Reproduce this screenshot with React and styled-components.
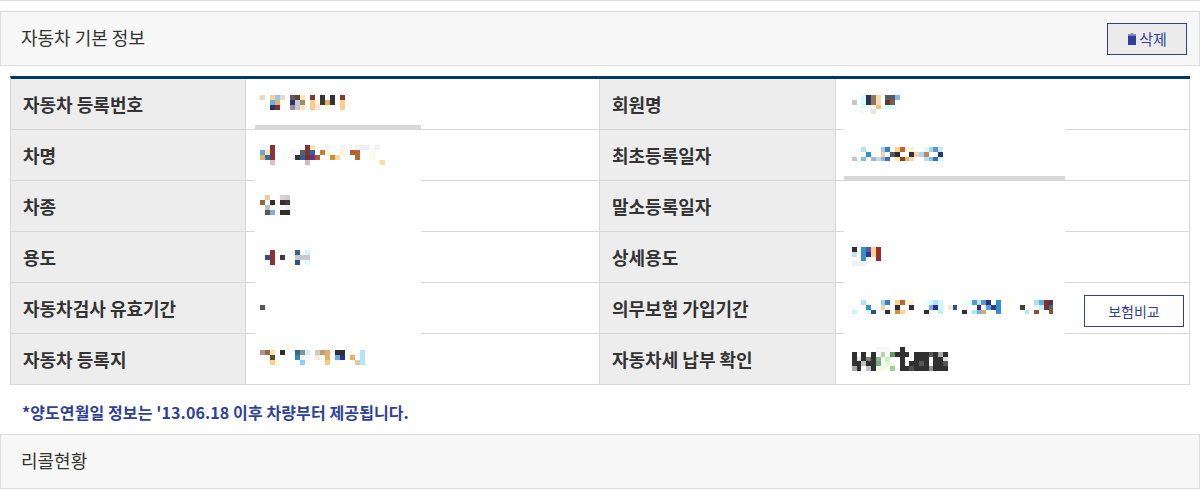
import styled, { createGlobalStyle } from "styled-components";

const GlobalStyle = createGlobalStyle`
  body {
    margin: 0;
    background: #fff;
    font-family: "Noto Sans CJK KR", "Noto Sans", sans-serif;
    color: #333;
  }
`;

// blurred values, one string per line of blocks: "column:colour"
const blur = {
  number: [
    "0:e8d8c4 2:fbd08f 3:93c8ee 4:e8d8c8 6:5c5c5c 7:57483a 8:fde3b0 10:7d3b33 12:333 14:333 16:7d3b33",
    "2:66ade8 3:e9ab66 6:2f2f7a 7:c8c8d0 8:9b8c6c 10:fdcb8b 11:fff9d8 12:40392c 13:e9ab66 14:333 16:fdcb8b",
    "2:2e2e70 3:7d3030 6:929292 7:c4c8dc 8:fde3b0 10:fdcb8b 11:fde0d8 13:fffde0 16:fdcb8b",
  ],
  name: [
    "1:f8f8fa 2:8e3232 9:7d3535 10:fde9b5 12:f8f8fd 13:f2f2f6 16:f2f2f8 19:f8f0f0 20:f0f0f4 21:f0f0f4 23:f0f0f4",
    "0:5faae0 1:fde3ae 2:8e3232 6:f2f2f6 8:606060 9:7d3535 10:3060b0 12:c48030 13:fffad0 16:fff8c8 18:b06030 19:b06830 22:fffde0",
    "0:e9b066 1:3070b0 2:8e3232 7:333 8:3a5aa0 9:703030 10:703080 11:a85a30 14:d09030 15:fdd8a0 19:b06c30 22:fffde0",
    "2:dcc0c4 9:ccc0c4 24:fddca0",
  ],
  kind: [
    "1:f0c8a0 4:e4d0c8 5:c8ccdc",
    "0:906a48 2:2e2e2e 4:2e2e40 5:403828",
    "1:c0c0c0 4:f8f4f8 5:f0f0fa",
    "1:585858 2:7eb0e0 4:2e2e2e 5:2e2e2e",
  ],
  use: [
    "2:8e3232 7:34609a 9:d0f4ff",
    "1:2e5090 2:8e3232 4:4a3040 7:c8c8cc 8:c8c8cc 9:c8c8cc",
    "2:8e3232 7:2e5090 9:e0f8ff",
  ],
  period: ["0:585858"],
  place: [
    "0:b89090 1:907050 2:fde3a0 4:2e2e2e 7:306888 8:909090 9:d0f0ff 11:d0c8c8 12:c09c70 13:e9ab66 15:2e2e36 16:2e2e36 18:fffde8 20:b0e4ff",
    "2:505038 7:3088c0 8:f0f0f4 9:f8f8ff 11:f4eadc 13:e9ab66 15:66a8e8 16:2e2e80 18:e9b066 20:b0e4ff",
    "2:fdd088 3:fffde0 8:90ccff 13:fdcb80 19:e8c8a0 20:b0e4ff",
  ],
  member: [
    "3:d0ffff 4:303050 5:907860 6:f4dcb0 8:5a5a5a 9:5a5a5a 10:7eb8ec",
    "1:c8c8c8 3:d0ffff 4:303050 5:907860 6:f4dcb0 8:603828 9:786050",
    "3:d8ffff 6:f4c080 8:ccffff 9:ccffff",
    "3:f0ffff 5:f0e0d8",
  ],
  firstDate: [
    "0:fffff4 3:b0e0ff 7:a0ccec 8:3a80c0 10:fdd090 11:b06c30 12:fff4d8 13:fff0d0 16:e0f8ff 17:a0d4f4 18:5898d0 19:c0f0ff",
    "4:3090d0 7:fdd0a0 8:e8ffff 9:585858 10:2e2e2e 13:303040 14:fdd0a0 15:a8d4f8 16:c08858 19:303080",
    "1:c8c8c8 3:80c0ec 5:98bcc8 6:c8d8ec 7:98b4dc 8:3a70b0 10:fde8b0 11:804828 12:ecb070 13:ecd8b8 16:c0dcec 17:80c0ec 18:3a70b0 19:c8ffff",
  ],
  detail: [
    "1:303030 3:3090d0 4:5858a0 5:fdd090 6:903030",
    "1:c8e0ec 3:3090d0 4:303090 5:fdd090 6:903030",
    "3:3090d0 6:903030",
    "1:f0f0f4 2:f0f0f4 3:f0f0f4",
  ],
  insurance: [
    "0:fffff4 3:b0e0ff 7:a0ccec 8:3a80c0 10:fdd090 11:b06c30 12:fff4d8 13:fff0d0 16:f0ffff 17:d8f8ff 18:b0e0ff 19:d0f8ff 24:f0ffff 25:e0ffff 26:5898d0 27:b8e8ff 28:5898d0 29:303090 31:3090d0 33:fffff0 39:b0dcf4 40:60b0e8 41:803030 42:603040",
    "4:3090d0 7:fdd0a0 8:e8ffff 10:303030 13:303040 17:80a8d0 18:303090 19:d0f8ff 21:f0e8d8 22:305090 27:303080 29:58a0d8 30:304080 31:3090d0 33:fffff0 36:484030 40:c0f0ff 41:803030 42:407070",
    "1:c8f4ff 4:d8ffff 5:305090 8:303030 10:d09040 11:fdd0a0 12:fff8d8 16:303030 19:b8f0ff 24:303030 26:b0e4ff 27:70b0f0 28:e0a868 31:3090d0 37:b0e4ff 39:905030 42:905030",
  ],
  tax: [
    "6:faf5fa 7:faf5fa 8:faf5fa 11:303030",
    "1:303030 3:303030 5:303030 7:b0d8a8 9:609860 10:303030 11:303030 12:303030 14:303030 15:303030 16:303030 17:585858 18:303030 19:a8a8a8 20:303030",
    "1:303030 2:e8e8e8 3:303030 4:808080 5:303030 6:90b890 7:f0fff0 8:c8f0c0 11:303030 14:303030 15:303030 16:303030 18:303030 19:303030 20:e0e0e0",
    "1:303030 2:303030 3:c0c0c0 4:303030 5:303030 6:80a880 8:d8ffd0 9:f0fff0 11:303030 13:303030 14:303030 15:585858 16:303030 18:303030 19:303030 20:585858",
    "1:a8a8a8 2:303030 4:c0c0c0 5:303030 6:e8ffe0 7:e8ffe0 9:a0d0a0 11:303030 12:303030 13:505050 14:303030 15:303030 16:303030 17:909090 18:303030 19:303030 20:303030",
  ],
};

const Mosaic = ({ rows, cell = 5, top = 0 }) => (
  <BlurSvg $top={top} width={cell * 44} height={cell * rows.length}>
    {rows.map((row, y) =>
      row.split(" ").map((block) => {
        const [col, colour] = block.split(":");
        return (
          <rect
            key={y + "-" + col}
            x={col * cell}
            y={y * cell}
            width={cell}
            height={cell}
            fill={"#" + colour}
          />
        );
      })
    )}
  </BlurSvg>
);

const TrashIcon = () => (
  <svg width="10" height="13" viewBox="0 0 10 13">
    <path d="M1 2h2.500V1h3v1H9v1.500H1z" fill="#8a8fb4" />
    <path d="M1 3.500h8V13H1z" fill="#2f3f9a" />
  </svg>
);

const App = () => {
  return (
    <Page>
      <GlobalStyle />
      <SectionBar>
        <SectionTitle>자동차 기본 정보</SectionTitle>
        <DeleteButton>
          <TrashIcon />
          삭제
        </DeleteButton>
      </SectionBar>

      <InfoTable>
        <colgroup>
          <Col $w={235} />
          <Col $w={354} />
          <Col $w={236} />
          <Col $w={354} />
        </colgroup>
        <tbody>
          <tr>
            <Label>자동차 등록번호</Label>
            <LeftValue>
              <Mosaic rows={blur.number} top={16} />
              <LeftPatch $bar />
            </LeftValue>
            <Label>회원명</Label>
            <RightValue>
              <Mosaic rows={blur.member} cell={4.8} top={16} />
              <RightPatch />
            </RightValue>
          </tr>
          <tr>
            <Label>차명</Label>
            <LeftValue>
              <Mosaic rows={blur.name} top={15} />
              <LeftPatch />
            </LeftValue>
            <Label>최초등록일자</Label>
            <RightValue>
              <Mosaic rows={blur.firstDate} cell={4.8} top={17} />
              <RightPatch $bar />
            </RightValue>
          </tr>
          <tr>
            <Label>차종</Label>
            <LeftValue>
              <Mosaic rows={blur.kind} top={14} />
              <LeftPatch />
            </LeftValue>
            <Label>말소등록일자</Label>
            <RightValue>
              <RightPatch />
            </RightValue>
          </tr>
          <tr>
            <Label>용도</Label>
            <LeftValue>
              <Mosaic rows={blur.use} top={18} />
              <LeftPatch />
            </LeftValue>
            <Label>상세용도</Label>
            <RightValue>
              <Mosaic rows={blur.detail} cell={4.8} top={15} />
              <RightPatch />
            </RightValue>
          </tr>
          <tr>
            <Label>자동차검사 유효기간</Label>
            <LeftValue>
              <Mosaic rows={blur.period} top={22} />
              <LeftPatch />
            </LeftValue>
            <Label>의무보험 가입기간</Label>
            <RightValue>
              <Mosaic rows={blur.insurance} cell={4.8} top={17} />
              <CompareButton>보험비교</CompareButton>
              <RightPatch />
            </RightValue>
          </tr>
          <tr>
            <Label>자동차 등록지</Label>
            <LeftValue>
              <Mosaic rows={blur.place} top={16} />
            </LeftValue>
            <Label>자동차세 납부 확인</Label>
            <RightValue>
              <Mosaic rows={blur.tax} cell={4.8} top={13} />
            </RightValue>
          </tr>
        </tbody>
      </InfoTable>

      <Notice>*양도연월일 정보는 '13.06.18 이후 차량부터 제공됩니다.</Notice>

      <SectionBar>
        <SectionTitle>리콜현황</SectionTitle>
      </SectionBar>
    </Page>
  );
};

const Page = styled.div`
  border-top: 1px solid #ddd;
  padding-top: 10px;
`;

const SectionBar = styled.div`
  box-sizing: border-box;
  height: 55px;
  padding: 0 12px 0 20px;
  display: flex;
  align-items: center;
  justify-content: space-between;
  background: #f7f7f7;
  border: 1px solid #ddd;
`;

const SectionTitle = styled.h2`
  margin: 0 0 3px;
  font-size: 18px;
  font-weight: 400;
  color: #333;
`;

const DeleteButton = styled.button`
  box-sizing: border-box;
  width: 80px;
  height: 32px;
  padding: 0;
  display: flex;
  align-items: center;
  justify-content: center;
  gap: 2px;
  background: #ebebeb;
  border: 1px solid #2f3f9a;
  color: #2f3f9a;
  font-family: inherit;
  font-size: 15px;
`;

const InfoTable = styled.table`
  box-sizing: border-box;
  width: 1180px;
  margin: 10px 0 0 10px;
  table-layout: fixed;
  border-collapse: separate;
  border-spacing: 0;
  border-top: 3px solid #003764;
  border-left: 1px solid #d8d8d8;
`;

const Col = styled.col`
  width: ${(p) => p.$w}px;
`;

const Label = styled.th`
  box-sizing: border-box;
  height: 51px;
  padding: 0 0 0 12px;
  background: #ededed;
  border-right: 1px solid #d8d8d8;
  border-bottom: 1px solid #d8d8d8;
  text-align: left;
  font-size: 18px;
  font-weight: 700;
  color: #333;
`;

const Value = styled.td`
  position: relative;
  box-sizing: border-box;
  height: 51px;
  padding: 0;
  vertical-align: top;
  background: #fff;
  border-right: 1px solid #d8d8d8;
  border-bottom: 1px solid #d8d8d8;
`;

const LeftValue = styled(Value)`
  padding-left: 14px;
`;

const RightValue = styled(Value)`
  padding-left: 11px;
`;

const BlurSvg = styled.svg`
  display: block;
  margin-top: ${(p) => p.$top}px;
  shape-rendering: crispEdges;
`;

// redaction left over the cell's bottom line: a white gap or a grey bar
const Patch = styled.span`
  position: absolute;
  bottom: ${(p) => (p.$bar ? 0 : "-1px")};
  height: ${(p) => (p.$bar ? "4px" : "1px")};
  background: ${(p) => (p.$bar ? "#d8d8d8" : "#fff")};
`;

const LeftPatch = styled(Patch)`
  left: 9px;
  width: 166px;
`;

const RightPatch = styled(Patch)`
  left: 8px;
  width: 221px;
`;

const CompareButton = styled.button`
  position: absolute;
  top: 12px;
  right: 5px;
  box-sizing: border-box;
  width: 100px;
  height: 32px;
  padding: 0;
  background: #fff;
  border: 1px solid #2f3f9a;
  color: #2f3f9a;
  font-family: inherit;
  font-size: 14px;
`;

const Notice = styled.p`
  box-sizing: border-box;
  margin: 0;
  height: 49px;
  padding: 4px 0 0 22px;
  display: flex;
  align-items: center;
  font-size: 16px;
  font-weight: 700;
  letter-spacing: 0.1px;
  color: #2f3f9a;
`;

export default App;
